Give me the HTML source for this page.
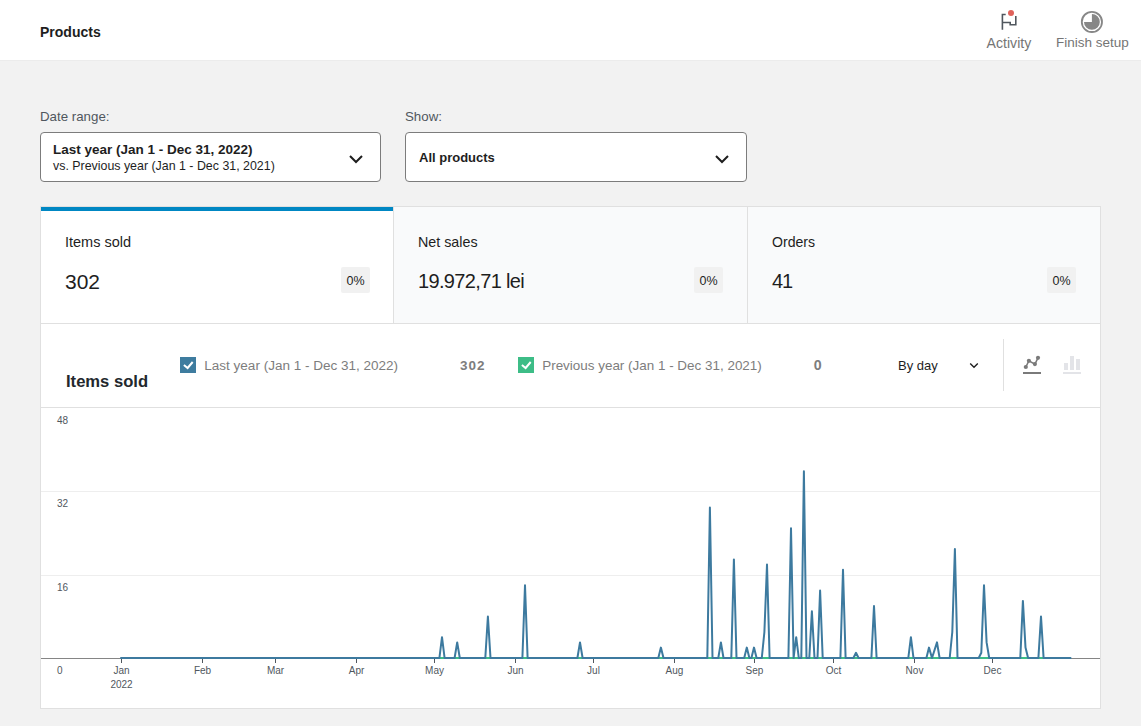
<!DOCTYPE html>
<html><head><meta charset="utf-8">
<style>
*{box-sizing:border-box;margin:0;padding:0}
html,body{width:1141px;height:726px;overflow:hidden;background:#f2f2f2;font-family:"Liberation Sans",sans-serif;color:#1e1e1e}
.a{position:absolute;white-space:nowrap}
.hdr{position:absolute;left:0;top:0;width:1141px;height:61px;background:#fff;border-bottom:1px solid #ececec}
.lbl{font-size:13px;color:#50575e}
.sel{position:absolute;top:132px;height:50px;background:#fff;border:1px solid #7c7c7c;border-radius:4px}
.cards{position:absolute;left:40px;top:206px;width:1061px;height:118px;background:#f9fafb;border:1px solid #e0e0e0}
.clabel{font-size:14px;color:#1e1e1e}
.cval{font-size:20px;color:#1e1e1e}
.badge{position:absolute;top:60px;width:29px;height:26px;background:#f1f1f1;border-radius:2px;font-size:12.5px;line-height:28px;text-align:center;color:#1e1e1e}
.panel{position:absolute;left:40px;top:324px;width:1061px;height:385px;background:#fff;border:1px solid #e0e0e0;border-top:none}
.leg{font-size:13px;color:#7d7d7d}
.ax{font-size:10px;fill:#50575e;font-family:"Liberation Sans",sans-serif}
</style></head><body>
<div class="hdr">
  <div class="a" style="left:40px;top:24px;font-size:14px;font-weight:bold">Products</div>
  <svg class="a" style="left:995px;top:5px" width="26" height="28" viewBox="995 5 26 28">
    <path d="M1002.4,29.8 V14.5 H1005.7 M1002.4,22.5 H1010.2 V24.7 H1015.8 V16" fill="none" stroke="#50575e" stroke-width="1.6"/>
    <circle cx="1011" cy="12.9" r="3" fill="#e0625b"/>
  </svg>
  <div class="a" style="left:986.6px;top:35px;font-size:14.1px;color:#757575">Activity</div>
  <svg class="a" style="left:1079px;top:9px" width="26" height="26" viewBox="1079 9 26 26">
    <circle cx="1091.9" cy="21.9" r="10.1" fill="none" stroke="#878787" stroke-width="1.8"/>
    <path d="M1091.9,14 A7.9,7.9 0 1 1 1084,21.9 L1091.9,21.9 Z" fill="#878787"/>
  </svg>
  <div class="a" style="left:1056px;top:35px;font-size:13.5px;color:#757575">Finish setup</div>
</div>

<div class="a lbl" style="left:40px;top:109px;font-size:13.3px">Date range:</div>
<div class="sel" style="left:40px;width:341px">
  <div class="a" style="left:12px;top:9px;font-size:13.5px;font-weight:bold">Last year (Jan 1 - Dec 31, 2022)</div>
  <div class="a" style="left:12px;top:26px;font-size:12.4px">vs. Previous year (Jan 1 - Dec 31, 2021)</div>
  <svg class="a" style="left:307.2px;top:20.8px" width="16" height="10" viewBox="0 0 16 10"><path d="M2,2 L8,8 L14,2" fill="none" stroke="#1e1e1e" stroke-width="2"/></svg>
</div>
<div class="a lbl" style="left:405px;top:109px;font-size:13.3px">Show:</div>
<div class="sel" style="left:405px;width:342px">
  <div class="a" style="left:13px;top:17px;font-size:13px;font-weight:bold">All products</div>
  <svg class="a" style="left:308.2px;top:20.8px" width="16" height="10" viewBox="0 0 16 10"><path d="M2,2 L8,8 L14,2" fill="none" stroke="#1e1e1e" stroke-width="2"/></svg>
</div>

<div class="cards">
  <div class="a" style="left:0;top:0;width:352px;height:116px;background:#fff;border-top:4px solid #0087c3"></div>
  <div class="a" style="left:352px;top:0;width:1px;height:116px;background:#e0e0e0"></div>
  <div class="a" style="left:706px;top:0;width:1px;height:116px;background:#e0e0e0"></div>
  <div class="a clabel" style="left:24px;top:27.3px;font-size:14.5px">Items sold</div>
  <div class="a cval" style="left:24px;top:63px;font-size:21px">302</div>
  <div class="badge" style="left:300px">0%</div>
  <div class="a clabel" style="left:377px;top:27.3px;font-size:14.3px">Net sales</div>
  <div class="a cval" style="left:377px;top:62.5px;font-size:20px;letter-spacing:-0.65px">19.972,71 lei</div>
  <div class="badge" style="left:653px">0%</div>
  <div class="a clabel" style="left:731px;top:27.3px;font-size:14.1px">Orders</div>
  <div class="a cval" style="left:731px;top:62.5px;font-size:20px;letter-spacing:-1.2px">41</div>
  <div class="badge" style="left:1006px">0%</div>
</div>

<div class="panel">
  <div class="a" style="left:0;top:83px;width:1059px;height:1px;background:#e0e0e0"></div>
  <div class="a" style="left:25px;top:47.5px;font-size:16.6px;font-weight:bold;color:#23282d">Items sold</div>
  <svg class="a" style="left:139px;top:33px" width="16" height="16" viewBox="0 0 16 16"><rect width="16" height="16" fill="#3e7c9f"/><path d="M3.9,8 L7.6,11 L12.7,5" fill="none" stroke="#fff" stroke-width="2"/></svg>
  <div class="a leg" style="left:163.3px;top:33.7px;font-size:13.52px">Last year (Jan 1 - Dec 31, 2022)</div>
  <div class="a leg" style="left:419px;top:34px;font-size:13.5px;font-weight:bold;letter-spacing:1px">302</div>
  <svg class="a" style="left:477px;top:33px" width="16" height="16" viewBox="0 0 16 16"><rect width="16" height="16" fill="#3dbd87"/><path d="M3.9,8 L7.6,11 L12.7,5" fill="none" stroke="#fff" stroke-width="2"/></svg>
  <div class="a leg" style="left:501.2px;top:33.7px;font-size:13.44px">Previous year (Jan 1 - Dec 31, 2021)</div>
  <div class="a leg" style="left:772.8px;top:33.2px;font-size:14.2px;font-weight:bold">0</div>
  <div class="a" style="left:857px;top:33.8px;font-size:13px;color:#1e1e1e">By day</div>
  <svg class="a" style="left:928px;top:38px" width="10" height="7" viewBox="0 0 10 7"><path d="M1.2,1.6 L5,5.2 L8.8,1.6" fill="none" stroke="#1e1e1e" stroke-width="1.4"/></svg>
  <div class="a" style="left:962px;top:15px;width:1px;height:52px;background:#e0e0e0"></div>
</div>

<svg class="a" style="left:0;top:0" width="1141" height="726" viewBox="0 0 1141 726">
  <!-- chart icons -->
  <g fill="#7a7a7a" stroke="#7a7a7a">
    <path d="M1025.8,367 L1028.9,360.8 L1034.9,364.1 L1038,357.8" fill="none" stroke-width="1.5"/>
    <circle cx="1025.8" cy="367" r="2.1" stroke="none"/>
    <circle cx="1028.9" cy="360.8" r="2.1" stroke="none"/>
    <circle cx="1034.9" cy="364.1" r="2.1" stroke="none"/>
    <circle cx="1038" cy="357.8" r="2.1" stroke="none"/>
    <rect x="1023" y="372" width="18" height="2" stroke="none"/>
  </g>
  <g fill="#e3e4e8">
    <rect x="1064" y="363" width="4" height="7"/>
    <rect x="1070" y="356" width="4" height="14"/>
    <rect x="1076" y="359" width="4" height="11"/>
    <rect x="1063" y="372" width="18" height="2"/>
  </g>
  <!-- grid -->
  <rect x="41" y="491" width="1059" height="1" fill="#eeeeee"/>
  <rect x="41" y="575" width="1059" height="1" fill="#eeeeee"/>
  <text class="ax" x="57" y="424">48</text>
  <text class="ax" x="57" y="507">32</text>
  <text class="ax" x="57" y="591">16</text>
  <text class="ax" x="57" y="674">0</text>
  <rect x="41" y="658" width="1059" height="1" fill="#858585"/>
  <g fill="#50575e">
    <rect x="121" y="659" width="1" height="4"/>
    <rect x="202" y="659" width="1" height="4"/>
    <rect x="275" y="659" width="1" height="4"/>
    <rect x="356" y="659" width="1" height="4"/>
    <rect x="434" y="659" width="1" height="4"/>
    <rect x="515" y="659" width="1" height="4"/>
    <rect x="593" y="659" width="1" height="4"/>
    <rect x="674" y="659" width="1" height="4"/>
    <rect x="754" y="659" width="1" height="4"/>
    <rect x="833" y="659" width="1" height="4"/>
    <rect x="914" y="659" width="1" height="4"/>
    <rect x="992" y="659" width="1" height="4"/>
  </g>
  <g class="ax" text-anchor="middle">
    <text x="121.5" y="674">Jan</text>
    <text x="121.5" y="688">2022</text>
    <text x="202.5" y="674">Feb</text>
    <text x="275.5" y="674">Mar</text>
    <text x="356.5" y="674">Apr</text>
    <text x="434.5" y="674">May</text>
    <text x="515.5" y="674">Jun</text>
    <text x="593.5" y="674">Jul</text>
    <text x="674.5" y="674">Aug</text>
    <text x="754.5" y="674">Sep</text>
    <text x="833.5" y="674">Oct</text>
    <text x="914.5" y="674">Nov</text>
    <text x="992.5" y="674">Dec</text>
  </g>
  <path d="M121,658 L1070.5,658" stroke="#3dbd87" stroke-width="2" fill="none"/>
  <path d="M121.0,658.0 L439.4,658.0 L442.0,637.2 L444.6,658.0 L454.6,658.0 L457.2,642.4 L459.8,658.0 L485.3,658.0 L487.9,616.5 L490.5,658.0 L522.4,658.0 L525.0,585.3 L527.6,658.0 L577.4,658.0 L580.0,642.4 L582.6,658.0 L658.3,658.0 L660.9,647.6 L663.5,658.0 L707.3,658.0 L709.9,507.5 L712.5,658.0 L718.3,658.0 L720.9,642.4 L723.5,658.0 L731.3,658.0 L733.9,559.4 L736.5,658.0 L744.2,658.0 L746.8,647.6 L749.4,658.0 L751.4,658.0 L754.0,647.6 L756.6,658.0 L761.8,658.0 L764.4,632.0 L767.0,564.6 L769.6,658.0 L788.4,658.0 L791.0,528.2 L793.6,658.0 L796.2,637.2 L798.8,658.0 L801.3,658.0 L803.9,471.2 L806.5,658.0 L809.3,658.0 L811.9,611.3 L814.5,658.0 L817.5,658.0 L820.1,590.5 L822.7,658.0 L840.4,658.0 L843.0,569.8 L845.6,658.0 L853.4,658.0 L856.0,652.8 L858.6,658.0 L871.4,658.0 L874.0,606.1 L876.6,658.0 L908.3,658.0 L910.9,637.2 L913.5,658.0 L926.4,658.0 L929.0,647.6 L932.0,658.0 L937.0,642.4 L939.6,658.0 L949.7,658.0 L952.3,632.0 L954.9,549.0 L957.5,658.0 L978.7,658.0 L981.3,652.8 L984.0,585.3 L986.6,642.4 L989.2,658.0 L1020.3,658.0 L1022.9,600.9 L1025.5,647.6 L1028.1,658.0 L1038.4,658.0 L1041.0,616.5 L1043.6,658.0 L1070.5,658.0" stroke="#3d7a9f" stroke-width="2" fill="none" stroke-linejoin="round" stroke-linecap="round"/>
</svg>
</body></html>
